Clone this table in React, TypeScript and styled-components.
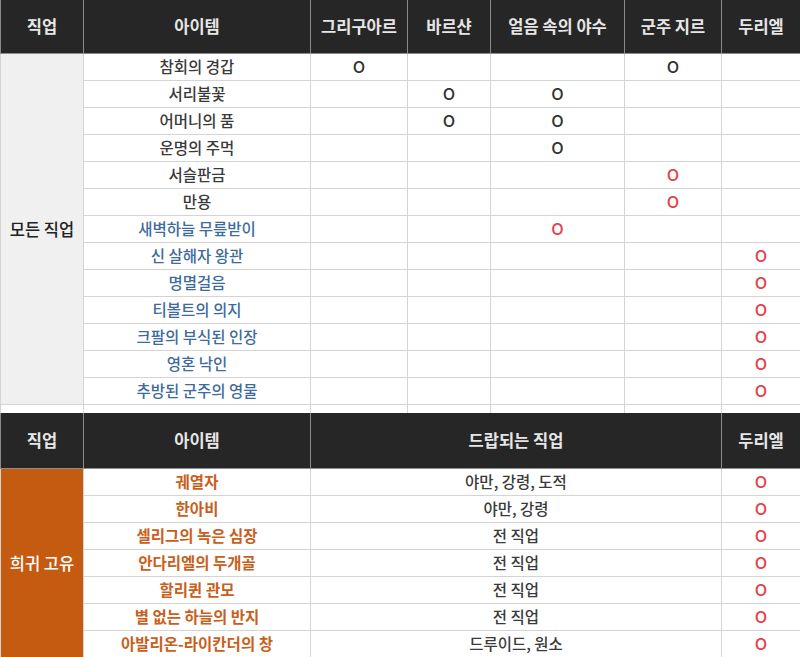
import React from "react";
import styled, { createGlobalStyle } from "styled-components";

const Global = createGlobalStyle`
  html, body { margin: 0; padding: 0; background: #ffffff; }
  body { font-family: "Noto Sans CJK KR", "Noto Sans", sans-serif; }
`;

const Table = styled.table`
  width: 800px;
  border-collapse: collapse;
  table-layout: fixed;
`;

const HeadCell = styled.th<{ $h?: number }>`
  box-sizing: border-box;
  background: #262626;
  color: #e6e6e6;
  font-size: 16.5px;
  font-weight: 700;
  height: ${(p) => p.$h ?? 53}px;
  padding: 0;
  border: 1px solid #8c8c8c;
  border-top: none;
  text-align: center;
  vertical-align: middle;
  white-space: nowrap;
`;

const GroupCell = styled.td<{ $bg: string; $fg: string }>`
  background: ${(p) => p.$bg};
  color: ${(p) => p.$fg};
  font-size: 16.5px;
  font-weight: 500;
  padding: 0;
  border: 1px solid #d4d4d4;
  text-align: center;
  vertical-align: middle;
`;

const Cell = styled.td<{ $fg?: string; $weight?: number }>`
  box-sizing: border-box;
  height: 27px;
  padding: 0;
  border: 1px solid #d4d4d4;
  text-align: center;
  vertical-align: middle;
  font-size: 15.5px;
  line-height: 25px;
  font-weight: ${(p) => p.$weight ?? 500};
  color: ${(p) => p.$fg ?? "#3a3a3a"};
  white-space: nowrap;
`;

const GapCell = styled.td`
  box-sizing: border-box;
  height: 9px;
  padding: 0;
  border: 1px solid #d4d4d4;
  border-bottom: none;
`;

const Mark = styled.span<{ $red?: boolean }>`
  font-size: 16.5px;
  font-weight: 500;
  color: ${(p) => (p.$red ? "#e2434a" : "#333333")};
`;

type Row = { name: string; blue?: boolean; marks: (0 | 1 | 2)[] };

const top: Row[] = [
  { name: "참회의 경갑", marks: [1, 0, 0, 1, 0] },
  { name: "서리불꽃", marks: [0, 1, 1, 0, 0] },
  { name: "어머니의 품", marks: [0, 1, 1, 0, 0] },
  { name: "운명의 주먹", marks: [0, 0, 1, 0, 0] },
  { name: "서슬판금", marks: [0, 0, 0, 2, 0] },
  { name: "만용", marks: [0, 0, 0, 2, 0] },
  { name: "새벽하늘 무릎받이", blue: true, marks: [0, 0, 2, 0, 0] },
  { name: "신 살해자 왕관", blue: true, marks: [0, 0, 0, 0, 2] },
  { name: "명멸걸음", blue: true, marks: [0, 0, 0, 0, 2] },
  { name: "티볼트의 의지", blue: true, marks: [0, 0, 0, 0, 2] },
  { name: "크팔의 부식된 인장", blue: true, marks: [0, 0, 0, 0, 2] },
  { name: "영혼 낙인", blue: true, marks: [0, 0, 0, 0, 2] },
  { name: "추방된 군주의 영물", blue: true, marks: [0, 0, 0, 0, 2] },
];

const bottom = [
  { name: "궤열자", cls: "야만, 강령, 도적" },
  { name: "한아비", cls: "야만, 강령" },
  { name: "셀리그의 녹은 심장", cls: "전 직업" },
  { name: "안다리엘의 두개골", cls: "전 직업" },
  { name: "할리퀸 관모", cls: "전 직업" },
  { name: "별 없는 하늘의 반지", cls: "전 직업" },
  { name: "아발리온-라이칸더의 창", cls: "드루이드, 원소" },
];

const widths = [83, 227, 97, 83, 134, 97, 79];

export default function App() {
  return (
    <>
      <Global />
      <Table>
        <colgroup>
          {widths.map((w, i) => (
            <col key={i} style={{ width: w }} />
          ))}
        </colgroup>
        <tbody>
          <tr>
            <HeadCell>직업</HeadCell>
            <HeadCell>아이템</HeadCell>
            <HeadCell>그리구아르</HeadCell>
            <HeadCell>바르샨</HeadCell>
            <HeadCell>얼음 속의 야수</HeadCell>
            <HeadCell>군주 지르</HeadCell>
            <HeadCell>두리엘</HeadCell>
          </tr>
          {top.map((r, i) => (
            <tr key={r.name}>
              {i === 0 && (
                <GroupCell rowSpan={top.length} $bg="#f0f0f0" $fg="#222222">
                  모든 직업
                </GroupCell>
              )}
              <Cell $fg={r.blue ? "#3d6b9c" : "#3a3a3a"}>{r.name}</Cell>
              {r.marks.map((m, j) => (
                <Cell key={j}>{m ? <Mark $red={m === 2}>O</Mark> : null}</Cell>
              ))}
            </tr>
          ))}
          <tr>
            {widths.map((_, i) => (
              <GapCell key={i} />
            ))}
          </tr>
          <tr>
            <HeadCell $h={55}>직업</HeadCell>
            <HeadCell $h={55}>아이템</HeadCell>
            <HeadCell $h={55} colSpan={4}>
              드랍되는 직업
            </HeadCell>
            <HeadCell $h={55}>두리엘</HeadCell>
          </tr>
          {bottom.map((r, i) => (
            <tr key={r.name}>
              {i === 0 && (
                <GroupCell rowSpan={bottom.length} $bg="#c55a11" $fg="#ffffff">
                  희귀 고유
                </GroupCell>
              )}
              <Cell $fg="#c8601c" $weight={700}>
                {r.name}
              </Cell>
              <Cell colSpan={4}>{r.cls}</Cell>
              <Cell>
                <Mark $red>O</Mark>
              </Cell>
            </tr>
          ))}
        </tbody>
      </Table>
    </>
  );
}
